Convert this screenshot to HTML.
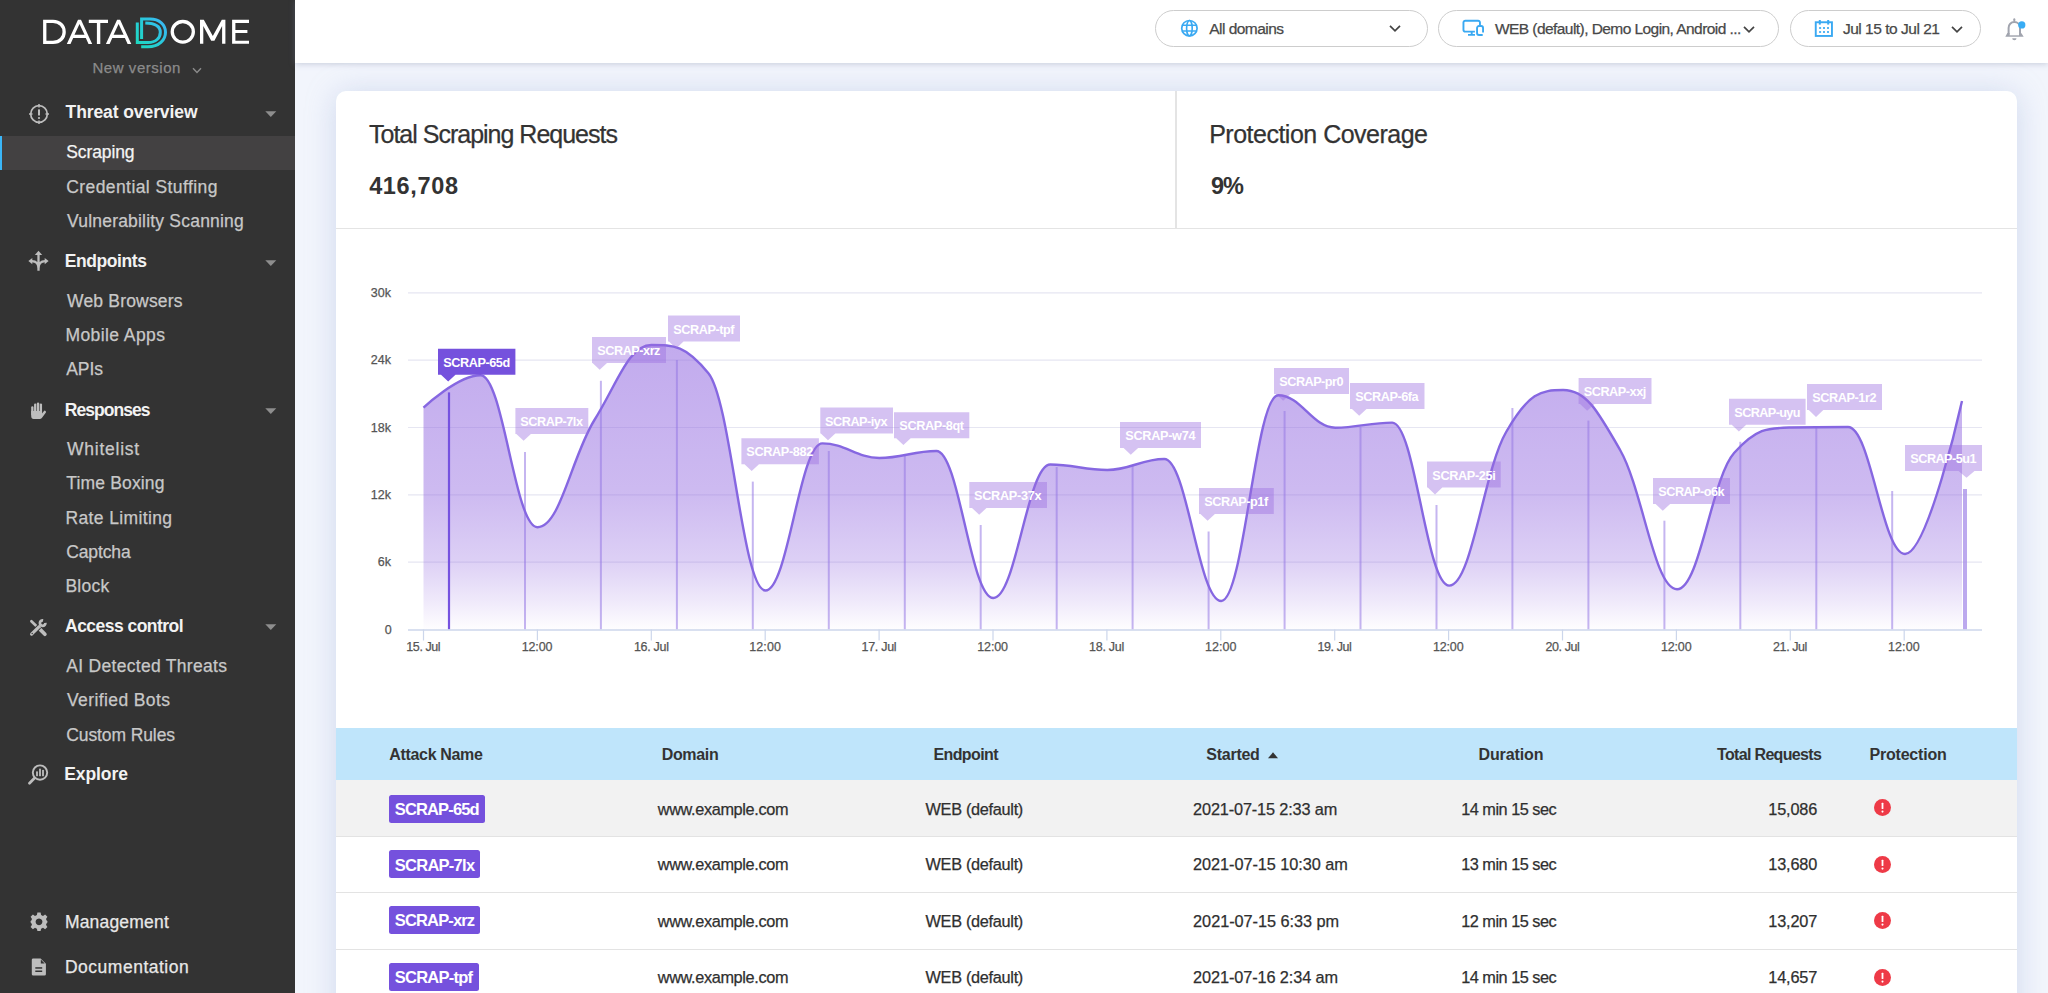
<!DOCTYPE html><html><head><meta charset='utf-8'><title>DataDome</title><style>
*{margin:0;padding:0;box-sizing:border-box}
html,body{width:2048px;height:993px;overflow:hidden;background:#f2f5fc;font-family:'Liberation Sans', sans-serif}
.t{position:absolute;white-space:nowrap;-webkit-text-stroke:0.25px currentColor}
.b{-webkit-text-stroke:0}
.ab{position:absolute}
.chart{position:absolute;left:0;top:0}
#side{position:absolute;left:0;top:0;width:295px;height:993px;background:#333333}
#sel{position:absolute;left:0;top:135.5px;width:295px;height:34.3px;background:#434142}
#selbar{position:absolute;left:0;top:135.5px;width:2px;height:34.3px;background:#3ab6f8}
#hdr{position:absolute;left:295px;top:0;width:1753px;height:63px;background:#fff;box-shadow:0 1px 6px rgba(120,130,160,0.35)}
.pill{position:absolute;top:10.4px;height:36.2px;border:1.5px solid #cdcdcd;border-radius:19px;background:#fff}
#card{position:absolute;left:335.5px;top:91.4px;width:1681px;height:1000px;background:#fff;border-radius:10px;box-shadow:0 2px 30px rgba(150,170,215,0.38)}
#vdiv{position:absolute;left:1175.4px;top:91.4px;width:1.2px;height:137px;background:#e4e4e4}
#hdiv{position:absolute;left:335.5px;top:228px;width:1681px;height:1.3px;background:#e4e4e4}
#thead{position:absolute;left:335.5px;top:728.2px;width:1681px;height:51.8px;background:#bfe5fb}
.row{position:absolute;left:335.5px;width:1681px}
.sep{position:absolute;left:335.5px;width:1681px;height:1.2px;background:#e3e3e3}
.badge{position:absolute;left:389.2px;height:28.3px;background:#7551dd;border-radius:2.5px}
</style></head><body>
<div id=side></div><div id=sel></div><div id=selbar></div>
<svg class=ab style='left:0;top:0' width=295 height=60 viewBox='0 0 295 60'>
<path d='M44.75,21.45 H53 C60,21.45 64.15,26.2 64.15,31.9 C64.15,37.6 60,42.35 53,42.35 H44.75 Z' fill=none stroke='#ffffff' stroke-width=3.3 stroke-linejoin=miter />
<path fill='#ffffff' fill-rule=evenodd d='M66.8,44 L78,19.8 L81,19.8 L92.2,44 L88.5,44 L85.8,38.1 L73.2,38.1 L70.5,44 Z M74.5,34.7 L84.5,34.7 L79.5,23.9 Z' />
<path fill='#ffffff' d='M88.8,19.8 H108 V23 H100.3 V44 H96.9 V23 H88.8 Z' />
<path fill='#ffffff' fill-rule=evenodd d='M105.9,44 L117.1,19.8 L120.1,19.8 L131.3,44 L127.6,44 L124.9,38.1 L112.3,38.1 L109.6,44 Z M113.6,34.7 L123.6,34.7 L118.6,23.9 Z' />
<ellipse cx=182.8 cy=31.8 rx=10.55 ry=10.3 fill=none stroke='#ffffff' stroke-width=3.3 />
<path fill='#ffffff' d='M200,43.75 V19.8 H203.8 L212.8,36.0 L221.8,19.8 H225.4 V43.75 H222.1 V26.0 L214.4,40.8 H211.2 L203.3,26.0 V43.75 Z' />
<path fill='#ffffff' d='M232.1,19.8 H249 V22.9 H235.4 V30.0 H247.4 V33.1 H235.4 V40.7 H249 V43.75 H232.1 Z' />
<g fill=none stroke='url(#lg2)' stroke-width=3.0>
<path d='M137.3 22.6 V42.6 H148 C156 42.6 160.3 37.8 160.3 32.2 C160.3 26.6 156 23.4 145.3 23.1' />
<path d='M141.6 39 V19 H150 C159.5 19 165.5 24.8 165.5 32.2 C165.5 40 159 46.8 148 46.8 H141.2' />
</g>
<defs><linearGradient id=lg2 x1=135 y1=45 x2=166 y2=20 gradientUnits=userSpaceOnUse><stop offset=0 stop-color='#1ed9bd' /><stop offset=0.5 stop-color='#27cbd8' /><stop offset=1 stop-color='#3db5f8' /></linearGradient></defs>
</svg>
<div id=card></div><div id=vdiv></div><div id=hdiv></div>
<div id=hdr></div>
<div class=pill style='left:1155.1px;width:273.2px'></div>
<div class=pill style='left:1437.9px;width:341.5px'></div>
<div class=pill style='left:1790.2px;width:191.3px'></div>
<div id=thead></div>
<div class=row style='top:780px;height:56.6px;background:#f2f2f2'></div>
<div class=row style='top:836.6px;height:55.9px;background:#ffffff'></div>
<div class=row style='top:892.5px;height:56.7px;background:#ffffff'></div>
<div class=row style='top:949.2px;height:56.8px;background:#ffffff'></div>
<div class=sep style='top:836.0px'></div>
<div class=sep style='top:891.9px'></div>
<div class=sep style='top:948.6px'></div>
<div class=badge style='top:794.7px;width:95.5px'></div>
<div class=badge style='top:850.2px;width:91.2px'></div>
<div class=badge style='top:906px;width:91.2px'></div>
<div class=badge style='top:963px;width:89.6px'></div>
<svg class=chart width=2048 height=993 viewBox='0 0 2048 993'>
<defs><linearGradient id=ag x1=0 y1=0 x2=0 y2=1 gradientUnits=objectBoundingBox><stop offset=0 stop-color='#966ee1' stop-opacity='0.58' /><stop offset=0.3 stop-color='#966ee1' stop-opacity='0.52' /><stop offset=0.53 stop-color='#966ee1' stop-opacity='0.47' /><stop offset=0.755 stop-color='#966ee1' stop-opacity='0.33' /><stop offset=0.9 stop-color='#966ee1' stop-opacity='0.15' /><stop offset=1 stop-color='#966ee1' stop-opacity='0.01' /></linearGradient></defs>
<line x1=408 x2=1982 y1=562.1 y2=562.1 stroke='#e6e6f2' stroke-width=1.2 />
<line x1=408 x2=1982 y1=494.8 y2=494.8 stroke='#e6e6f2' stroke-width=1.2 />
<line x1=408 x2=1982 y1=427.5 y2=427.5 stroke='#e6e6f2' stroke-width=1.2 />
<line x1=408 x2=1982 y1=360.1 y2=360.1 stroke='#e6e6f2' stroke-width=1.2 />
<line x1=408 x2=1982 y1=292.8 y2=292.8 stroke='#e6e6f2' stroke-width=1.2 />
<path d='M423.50,407.60 C423.50,407.60 457.69,375.20 480.48,375.20 C503.27,375.20 514.67,527.20 537.46,527.20 C560.26,527.20 571.65,456.44 594.44,420.00 C617.24,383.56 628.63,345.00 651.43,345.00 C674.22,345.00 685.61,345.00 708.41,373.20 C731.20,401.40 742.60,590.50 765.39,590.50 C788.18,590.50 799.58,443.40 822.37,443.40 C845.16,443.40 856.56,458.00 879.35,458.00 C902.14,458.00 913.54,451.00 936.33,451.00 C959.13,451.00 970.52,598.00 993.31,598.00 C1016.11,598.00 1027.50,464.50 1050.30,464.50 C1073.09,464.50 1084.49,470.00 1107.28,470.00 C1130.07,470.00 1141.47,459.00 1164.26,459.00 C1187.05,459.00 1198.45,601.00 1221.24,601.00 C1244.03,601.00 1255.43,395.20 1278.22,395.20 C1301.01,395.20 1312.41,427.70 1335.20,427.70 C1358.00,427.70 1369.39,422.60 1392.19,422.60 C1414.98,422.60 1426.37,585.60 1449.17,585.60 C1471.96,585.60 1483.36,471.12 1506.15,432.00 C1528.94,392.88 1540.34,390.00 1563.13,390.00 C1585.92,390.00 1597.32,410.14 1620.11,450.00 C1642.90,489.86 1654.30,589.30 1677.09,589.30 C1699.89,589.30 1711.28,478.50 1734.07,453.00 C1756.87,427.50 1768.26,428.00 1791.06,427.50 C1813.85,427.00 1825.24,427.00 1848.04,427.00 C1870.83,427.00 1882.23,554.00 1905.02,554.00 C1927.81,554.00 1962.00,400.90 1962.00,400.90 L1962.00,629.50 L423.50,629.50 Z' fill='url(#ag)' />
<line x1=449.0 x2=449.0 y1=392.4 y2=629.5 stroke='#7652e0' stroke-width=2.2 />
<line x1=525.0 x2=525.0 y1=452 y2=629.5 stroke='#9678e4' stroke-opacity=0.55 stroke-width=2 />
<line x1=600.9 x2=600.9 y1=380.8 y2=629.5 stroke='#9678e4' stroke-opacity=0.55 stroke-width=2 />
<line x1=676.9 x2=676.9 y1=360 y2=629.5 stroke='#9678e4' stroke-opacity=0.55 stroke-width=2 />
<line x1=752.8 x2=752.8 y1=481.6 y2=629.5 stroke='#9678e4' stroke-opacity=0.55 stroke-width=2 />
<line x1=828.8 x2=828.8 y1=451 y2=629.5 stroke='#9678e4' stroke-opacity=0.55 stroke-width=2 />
<line x1=904.8 x2=904.8 y1=456 y2=629.5 stroke='#9678e4' stroke-opacity=0.55 stroke-width=2 />
<line x1=980.7 x2=980.7 y1=525 y2=629.5 stroke='#9678e4' stroke-opacity=0.55 stroke-width=2 />
<line x1=1056.7 x2=1056.7 y1=467 y2=629.5 stroke='#9678e4' stroke-opacity=0.55 stroke-width=2 />
<line x1=1132.6 x2=1132.6 y1=466 y2=629.5 stroke='#9678e4' stroke-opacity=0.55 stroke-width=2 />
<line x1=1208.6 x2=1208.6 y1=531.5 y2=629.5 stroke='#9678e4' stroke-opacity=0.55 stroke-width=2 />
<line x1=1284.6 x2=1284.6 y1=411 y2=629.5 stroke='#9678e4' stroke-opacity=0.55 stroke-width=2 />
<line x1=1360.5 x2=1360.5 y1=427 y2=629.5 stroke='#9678e4' stroke-opacity=0.55 stroke-width=2 />
<line x1=1436.5 x2=1436.5 y1=505 y2=629.5 stroke='#9678e4' stroke-opacity=0.55 stroke-width=2 />
<line x1=1512.4 x2=1512.4 y1=408 y2=629.5 stroke='#9678e4' stroke-opacity=0.55 stroke-width=2 />
<line x1=1588.4 x2=1588.4 y1=420.6 y2=629.5 stroke='#9678e4' stroke-opacity=0.55 stroke-width=2 />
<line x1=1664.4 x2=1664.4 y1=520.7 y2=629.5 stroke='#9678e4' stroke-opacity=0.55 stroke-width=2 />
<line x1=1740.3 x2=1740.3 y1=441.8 y2=629.5 stroke='#9678e4' stroke-opacity=0.55 stroke-width=2 />
<line x1=1816.3 x2=1816.3 y1=427.7 y2=629.5 stroke='#9678e4' stroke-opacity=0.55 stroke-width=2 />
<line x1=1892.2 x2=1892.2 y1=491 y2=629.5 stroke='#9678e4' stroke-opacity=0.55 stroke-width=2 />
<line x1=1965.0 x2=1965.0 y1=489 y2=629.5 stroke='#a58ce8' stroke-opacity=0.75 stroke-width=4 />
<path d='M423.50,407.60 C423.50,407.60 457.69,375.20 480.48,375.20 C503.27,375.20 514.67,527.20 537.46,527.20 C560.26,527.20 571.65,456.44 594.44,420.00 C617.24,383.56 628.63,345.00 651.43,345.00 C674.22,345.00 685.61,345.00 708.41,373.20 C731.20,401.40 742.60,590.50 765.39,590.50 C788.18,590.50 799.58,443.40 822.37,443.40 C845.16,443.40 856.56,458.00 879.35,458.00 C902.14,458.00 913.54,451.00 936.33,451.00 C959.13,451.00 970.52,598.00 993.31,598.00 C1016.11,598.00 1027.50,464.50 1050.30,464.50 C1073.09,464.50 1084.49,470.00 1107.28,470.00 C1130.07,470.00 1141.47,459.00 1164.26,459.00 C1187.05,459.00 1198.45,601.00 1221.24,601.00 C1244.03,601.00 1255.43,395.20 1278.22,395.20 C1301.01,395.20 1312.41,427.70 1335.20,427.70 C1358.00,427.70 1369.39,422.60 1392.19,422.60 C1414.98,422.60 1426.37,585.60 1449.17,585.60 C1471.96,585.60 1483.36,471.12 1506.15,432.00 C1528.94,392.88 1540.34,390.00 1563.13,390.00 C1585.92,390.00 1597.32,410.14 1620.11,450.00 C1642.90,489.86 1654.30,589.30 1677.09,589.30 C1699.89,589.30 1711.28,478.50 1734.07,453.00 C1756.87,427.50 1768.26,428.00 1791.06,427.50 C1813.85,427.00 1825.24,427.00 1848.04,427.00 C1870.83,427.00 1882.23,554.00 1905.02,554.00 C1927.81,554.00 1962.00,400.90 1962.00,400.90' fill='none' stroke='#8667e1' stroke-width=2.4 stroke-linejoin=round />
<line x1=408 x2=1982 y1=630.0 y2=630.0 stroke='#ccd6eb' stroke-width=1.6 />
<line x1=423.5 x2=423.5 y1=629.5 y2=640.5 stroke='#ccd6eb' stroke-width=1.2 />
<line x1=537.4 x2=537.4 y1=629.5 y2=640.5 stroke='#ccd6eb' stroke-width=1.2 />
<line x1=651.3 x2=651.3 y1=629.5 y2=640.5 stroke='#ccd6eb' stroke-width=1.2 />
<line x1=765.2 x2=765.2 y1=629.5 y2=640.5 stroke='#ccd6eb' stroke-width=1.2 />
<line x1=879.1 x2=879.1 y1=629.5 y2=640.5 stroke='#ccd6eb' stroke-width=1.2 />
<line x1=993.0 x2=993.0 y1=629.5 y2=640.5 stroke='#ccd6eb' stroke-width=1.2 />
<line x1=1106.9 x2=1106.9 y1=629.5 y2=640.5 stroke='#ccd6eb' stroke-width=1.2 />
<line x1=1220.8 x2=1220.8 y1=629.5 y2=640.5 stroke='#ccd6eb' stroke-width=1.2 />
<line x1=1334.7 x2=1334.7 y1=629.5 y2=640.5 stroke='#ccd6eb' stroke-width=1.2 />
<line x1=1448.6 x2=1448.6 y1=629.5 y2=640.5 stroke='#ccd6eb' stroke-width=1.2 />
<line x1=1562.5 x2=1562.5 y1=629.5 y2=640.5 stroke='#ccd6eb' stroke-width=1.2 />
<line x1=1676.4 x2=1676.4 y1=629.5 y2=640.5 stroke='#ccd6eb' stroke-width=1.2 />
<line x1=1790.3 x2=1790.3 y1=629.5 y2=640.5 stroke='#ccd6eb' stroke-width=1.2 />
<line x1=1904.2 x2=1904.2 y1=629.5 y2=640.5 stroke='#ccd6eb' stroke-width=1.2 />
<polygon points='438,348.8 515.4,348.8 515.4,374.8 455.5,374.8 448.2,381.6 441,374.8 438,374.8' fill='#7551dd' />
<polygon points='515.4,408 588.3,408 588.3,434.0 530.9,434.0 523.6,440.8 516.4,434.0 515.4,434.0' fill='#9a6ee0' fill-opacity='0.42' />
<polygon points='592,337 666,337 666,363.0 607.0,363.0 599.7,369.8 592.5,363.0 592,363.0' fill='#9a6ee0' fill-opacity='0.42' />
<polygon points='668,315.6 740,315.6 740,341.6 683.5,341.6 676.2,348.40000000000003 669,341.6 668,341.6' fill='#9a6ee0' fill-opacity='0.42' />
<polygon points='741.4,438.2 818.9,438.2 818.9,464.2 759.0,464.2 751.7,471.0 744.5,464.2 741.4,464.2' fill='#9a6ee0' fill-opacity='0.42' />
<polygon points='820.3,407.5 893.0,407.5 893.0,433.5 835.3,433.5 828.0,440.3 820.8,433.5 820.3,433.5' fill='#9a6ee0' fill-opacity='0.42' />
<polygon points='894,412.3 969.3,412.3 969.3,438.3 910.7,438.3 903.4000000000001,445.1 896.2,438.3 894,438.3' fill='#9a6ee0' fill-opacity='0.42' />
<polygon points='969.3,482 1047.0,482 1047.0,508.0 986.5,508.0 979.2,514.8 972,508.0 969.3,508.0' fill='#9a6ee0' fill-opacity='0.42' />
<polygon points='1120,422 1201,422 1201,448.0 1138.1,448.0 1130.8,454.8 1123.6,448.0 1120,448.0' fill='#9a6ee0' fill-opacity='0.42' />
<polygon points='1199,488 1273.8,488 1273.8,514.0 1214.9,514.0 1207.6000000000001,520.8 1200.4,514.0 1199,514.0' fill='#9a6ee0' fill-opacity='0.42' />
<polygon points='1274,368 1349,368 1349,394.0 1290.5,394.0 1283.2,400.8 1276,394.0 1274,394.0' fill='#9a6ee0' fill-opacity='0.42' />
<polygon points='1350,383 1424.5,383 1424.5,409.0 1366.5,409.0 1359.2,415.8 1352,409.0 1350,409.0' fill='#9a6ee0' fill-opacity='0.42' />
<polygon points='1427,461.6 1500.7,461.6 1500.7,487.6 1442.3,487.6 1435.0,494.40000000000003 1427.8,487.6 1427,487.6' fill='#9a6ee0' fill-opacity='0.42' />
<polygon points='1578.6,378 1651.5,378 1651.5,404.0 1594.5,404.0 1587.2,410.8 1580,404.0 1578.6,404.0' fill='#9a6ee0' fill-opacity='0.42' />
<polygon points='1653,478 1730,478 1730,504.0 1670.1,504.0 1662.8,510.8 1655.6,504.0 1653,504.0' fill='#9a6ee0' fill-opacity='0.42' />
<polygon points='1729,398.7 1805.6,398.7 1805.6,424.7 1746.2,424.7 1738.9,431.5 1731.7,424.7 1729,424.7' fill='#9a6ee0' fill-opacity='0.42' />
<polygon points='1807,384.1 1882,384.1 1882,410.1 1823.3,410.1 1816.0,416.90000000000003 1808.8,410.1 1807,410.1' fill='#9a6ee0' fill-opacity='0.42' />
<polygon points='1905,445 1982,445 1982,471.0 1974.5,471.0 1966.5,477.8 1958.5,471.0 1905,471.0' fill='#9a6ee0' fill-opacity='0.42' />
</svg>
<div class='t' style="left:92.49px;top:60.00px;font-size:15px;line-height:15px;color:#8b8b8b;letter-spacing:0.545px;">New version</div>
<div class='t b' style="left:65.58px;top:104.00px;font-size:17.5px;line-height:17.5px;color:#f2f2f2;font-weight:700;letter-spacing:-0.095px;">Threat overview</div>
<div class='t' style="left:66.22px;top:144.00px;font-size:17.5px;line-height:17.5px;color:#f4f4f4;letter-spacing:-0.102px;">Scraping</div>
<div class='t' style="left:66.22px;top:179.00px;font-size:17.5px;line-height:17.5px;color:#c8c8c8;letter-spacing:0.416px;">Credential Stuffing</div>
<div class='t' style="left:67.02px;top:213.00px;font-size:17.5px;line-height:17.5px;color:#c8c8c8;letter-spacing:0.201px;">Vulnerability Scanning</div>
<div class='t b' style="left:64.78px;top:253.00px;font-size:17.5px;line-height:17.5px;color:#f2f2f2;font-weight:700;letter-spacing:-0.423px;">Endpoints</div>
<div class='t' style="left:67.02px;top:293.00px;font-size:17.5px;line-height:17.5px;color:#c8c8c8;letter-spacing:0.189px;">Web Browsers</div>
<div class='t' style="left:65.42px;top:327.00px;font-size:17.5px;line-height:17.5px;color:#c8c8c8;letter-spacing:0.428px;">Mobile Apps</div>
<div class='t' style="left:66.22px;top:361.00px;font-size:17.5px;line-height:17.5px;color:#c8c8c8;letter-spacing:-0.023px;">APIs</div>
<div class='t b' style="left:64.78px;top:402.00px;font-size:17.5px;line-height:17.5px;color:#f2f2f2;font-weight:700;letter-spacing:-0.947px;">Responses</div>
<div class='t' style="left:67.02px;top:441.00px;font-size:17.5px;line-height:17.5px;color:#c8c8c8;letter-spacing:0.749px;">Whitelist</div>
<div class='t' style="left:66.22px;top:475.00px;font-size:17.5px;line-height:17.5px;color:#c8c8c8;letter-spacing:0.165px;">Time Boxing</div>
<div class='t' style="left:65.42px;top:510.00px;font-size:17.5px;line-height:17.5px;color:#c8c8c8;letter-spacing:0.380px;">Rate Limiting</div>
<div class='t' style="left:66.22px;top:544.00px;font-size:17.5px;line-height:17.5px;color:#c8c8c8;letter-spacing:-0.118px;">Captcha</div>
<div class='t' style="left:65.42px;top:578.00px;font-size:17.5px;line-height:17.5px;color:#c8c8c8;letter-spacing:0.256px;">Block</div>
<div class='t b' style="left:65.04px;top:618.00px;font-size:17.5px;line-height:17.5px;color:#f2f2f2;font-weight:700;letter-spacing:-0.527px;">Access control</div>
<div class='t' style="left:66.22px;top:658.00px;font-size:17.5px;line-height:17.5px;color:#c8c8c8;letter-spacing:0.301px;">AI Detected Threats</div>
<div class='t' style="left:67.02px;top:692.00px;font-size:17.5px;line-height:17.5px;color:#c8c8c8;letter-spacing:0.390px;">Verified Bots</div>
<div class='t' style="left:66.22px;top:727.00px;font-size:17.5px;line-height:17.5px;color:#c8c8c8;letter-spacing:-0.099px;">Custom Rules</div>
<div class='t b' style="left:64.24px;top:766.00px;font-size:17.5px;line-height:17.5px;color:#f2f2f2;font-weight:700;letter-spacing:-0.084px;">Explore</div>
<div class='t' style="left:64.95px;top:914.00px;font-size:17.5px;line-height:17.5px;color:#e8e8e8;letter-spacing:0.185px;">Management</div>
<div class='t' style="left:64.95px;top:959.00px;font-size:17.5px;line-height:17.5px;color:#e8e8e8;letter-spacing:0.507px;">Documentation</div>
<div class='t' style="left:1209.25px;top:21.00px;font-size:15.5px;line-height:15.5px;color:#484848;letter-spacing:-0.539px;">All domains</div>
<div class='t' style="left:1494.97px;top:21.00px;font-size:15.5px;line-height:15.5px;color:#484848;letter-spacing:-0.561px;">WEB (default), Demo Login, Android ...</div>
<div class='t' style="left:1842.89px;top:21.00px;font-size:15.5px;line-height:15.5px;color:#484848;letter-spacing:-0.478px;">Jul 15 to Jul 21</div>
<div class='t' style="left:369.03px;top:122.00px;font-size:25px;line-height:25px;color:#333333;letter-spacing:-1.003px;">Total Scraping Requests</div>
<div class='t b' style="left:369.14px;top:175.00px;font-size:23.5px;line-height:23.5px;color:#333333;font-weight:700;letter-spacing:0.661px;">416,708</div>
<div class='t' style="left:1209.17px;top:122.00px;font-size:25px;line-height:25px;color:#333333;letter-spacing:-0.502px;">Protection Coverage</div>
<div class='t b' style="left:1210.88px;top:175.00px;font-size:23.5px;line-height:23.5px;color:#333333;font-weight:700;letter-spacing:-0.969px;">9%</div>
<div class='t' style="left:384.78px;top:624.00px;font-size:12.5px;line-height:12.5px;color:#555555;">0</div>
<div class='t' style="left:377.73px;top:556.00px;font-size:12.5px;line-height:12.5px;color:#555555;">6k</div>
<div class='t' style="left:370.78px;top:489.00px;font-size:12.5px;line-height:12.5px;color:#555555;">12k</div>
<div class='t' style="left:370.78px;top:422.00px;font-size:12.5px;line-height:12.5px;color:#555555;">18k</div>
<div class='t' style="left:370.78px;top:354.00px;font-size:12.5px;line-height:12.5px;color:#555555;">24k</div>
<div class='t' style="left:370.78px;top:287.00px;font-size:12.5px;line-height:12.5px;color:#555555;">30k</div>
<div class='t' style="left:406.34px;top:641.00px;font-size:12.5px;line-height:12.5px;color:#555555;letter-spacing:-0.421px;">15. Jul</div>
<div class='t' style="left:521.72px;top:641.00px;font-size:12.5px;line-height:12.5px;color:#555555;letter-spacing:-0.130px;">12:00</div>
<div class='t' style="left:633.93px;top:641.00px;font-size:12.5px;line-height:12.5px;color:#555555;letter-spacing:-0.287px;">16. Jul</div>
<div class='t' style="left:749.31px;top:641.00px;font-size:12.5px;line-height:12.5px;color:#555555;letter-spacing:0.070px;">12:00</div>
<div class='t' style="left:861.52px;top:641.00px;font-size:12.5px;line-height:12.5px;color:#555555;letter-spacing:-0.287px;">17. Jul</div>
<div class='t' style="left:977.30px;top:641.00px;font-size:12.5px;line-height:12.5px;color:#555555;letter-spacing:-0.130px;">12:00</div>
<div class='t' style="left:1089.12px;top:641.00px;font-size:12.5px;line-height:12.5px;color:#555555;letter-spacing:-0.287px;">18. Jul</div>
<div class='t' style="left:1204.89px;top:641.00px;font-size:12.5px;line-height:12.5px;color:#555555;letter-spacing:0.070px;">12:00</div>
<div class='t' style="left:1317.51px;top:641.00px;font-size:12.5px;line-height:12.5px;color:#555555;letter-spacing:-0.421px;">19. Jul</div>
<div class='t' style="left:1432.88px;top:641.00px;font-size:12.5px;line-height:12.5px;color:#555555;letter-spacing:-0.130px;">12:00</div>
<div class='t' style="left:1545.50px;top:641.00px;font-size:12.5px;line-height:12.5px;color:#555555;letter-spacing:-0.421px;">20. Jul</div>
<div class='t' style="left:1660.88px;top:641.00px;font-size:12.5px;line-height:12.5px;color:#555555;letter-spacing:-0.130px;">12:00</div>
<div class='t' style="left:1773.09px;top:641.00px;font-size:12.5px;line-height:12.5px;color:#555555;letter-spacing:-0.421px;">21. Jul</div>
<div class='t' style="left:1888.07px;top:641.00px;font-size:12.5px;line-height:12.5px;color:#555555;letter-spacing:0.070px;">12:00</div>
<div class='t b' style="left:389.32px;top:747.00px;font-size:16px;line-height:16px;color:#333333;font-weight:700;letter-spacing:-0.338px;">Attack Name</div>
<div class='t b' style="left:661.70px;top:747.00px;font-size:16px;line-height:16px;color:#333333;font-weight:700;letter-spacing:-0.338px;">Domain</div>
<div class='t b' style="left:933.42px;top:747.00px;font-size:16px;line-height:16px;color:#333333;font-weight:700;letter-spacing:-0.591px;">Endpoint</div>
<div class='t b' style="left:1206.32px;top:747.00px;font-size:16px;line-height:16px;color:#333333;font-weight:700;letter-spacing:-0.264px;">Started</div>
<div class='t b' style="left:1478.52px;top:747.00px;font-size:16px;line-height:16px;color:#333333;font-weight:700;letter-spacing:-0.115px;">Duration</div>
<div class='t b' style="left:1717.04px;top:747.00px;font-size:16px;line-height:16px;color:#333333;font-weight:700;letter-spacing:-0.668px;">Total Requests</div>
<div class='t b' style="left:1869.52px;top:747.00px;font-size:16px;line-height:16px;color:#333333;font-weight:700;letter-spacing:-0.208px;">Protection</div>
<div class='t' style="left:657.74px;top:801.00px;font-size:16.3px;line-height:16.3px;color:#2f2f2f;letter-spacing:-0.357px;">www.example.com</div>
<div class='t' style="left:925.56px;top:801.00px;font-size:16.3px;line-height:16.3px;color:#2f2f2f;letter-spacing:-0.301px;">WEB (default)</div>
<div class='t' style="left:1193.12px;top:801.00px;font-size:16.3px;line-height:16.3px;color:#2f2f2f;letter-spacing:-0.145px;">2021-07-15 2:33 am</div>
<div class='t' style="left:1461.22px;top:801.00px;font-size:16.3px;line-height:16.3px;color:#2f2f2f;letter-spacing:-0.494px;">14 min 15 sec</div>
<div class='t' style="left:1768.23px;top:801.00px;font-size:16.3px;line-height:16.3px;color:#2f2f2f;letter-spacing:-0.146px;">15,086</div>
<div class='t' style="left:657.74px;top:856.00px;font-size:16.3px;line-height:16.3px;color:#2f2f2f;letter-spacing:-0.357px;">www.example.com</div>
<div class='t' style="left:925.56px;top:856.00px;font-size:16.3px;line-height:16.3px;color:#2f2f2f;letter-spacing:-0.301px;">WEB (default)</div>
<div class='t' style="left:1193.12px;top:856.00px;font-size:16.3px;line-height:16.3px;color:#2f2f2f;letter-spacing:-0.054px;">2021-07-15 10:30 am</div>
<div class='t' style="left:1461.22px;top:856.00px;font-size:16.3px;line-height:16.3px;color:#2f2f2f;letter-spacing:-0.494px;">13 min 15 sec</div>
<div class='t' style="left:1768.23px;top:856.00px;font-size:16.3px;line-height:16.3px;color:#2f2f2f;letter-spacing:-0.146px;">13,680</div>
<div class='t' style="left:657.74px;top:913.00px;font-size:16.3px;line-height:16.3px;color:#2f2f2f;letter-spacing:-0.357px;">www.example.com</div>
<div class='t' style="left:925.56px;top:913.00px;font-size:16.3px;line-height:16.3px;color:#2f2f2f;letter-spacing:-0.301px;">WEB (default)</div>
<div class='t' style="left:1193.12px;top:913.00px;font-size:16.3px;line-height:16.3px;color:#2f2f2f;letter-spacing:-0.044px;">2021-07-15 6:33 pm</div>
<div class='t' style="left:1461.22px;top:913.00px;font-size:16.3px;line-height:16.3px;color:#2f2f2f;letter-spacing:-0.494px;">12 min 15 sec</div>
<div class='t' style="left:1768.23px;top:913.00px;font-size:16.3px;line-height:16.3px;color:#2f2f2f;letter-spacing:-0.146px;">13,207</div>
<div class='t' style="left:657.74px;top:969.00px;font-size:16.3px;line-height:16.3px;color:#2f2f2f;letter-spacing:-0.357px;">www.example.com</div>
<div class='t' style="left:925.56px;top:969.00px;font-size:16.3px;line-height:16.3px;color:#2f2f2f;letter-spacing:-0.301px;">WEB (default)</div>
<div class='t' style="left:1193.12px;top:969.00px;font-size:16.3px;line-height:16.3px;color:#2f2f2f;letter-spacing:-0.097px;">2021-07-16 2:34 am</div>
<div class='t' style="left:1461.22px;top:969.00px;font-size:16.3px;line-height:16.3px;color:#2f2f2f;letter-spacing:-0.494px;">14 min 15 sec</div>
<div class='t' style="left:1768.23px;top:969.00px;font-size:16.3px;line-height:16.3px;color:#2f2f2f;letter-spacing:-0.146px;">14,657</div>
<div class='t b' style="left:394.75px;top:801.00px;font-size:16.5px;line-height:16.5px;color:#ffffff;font-weight:700;letter-spacing:-0.848px;">SCRAP-65d</div>
<div class='t b' style="left:394.75px;top:857.00px;font-size:16.5px;line-height:16.5px;color:#ffffff;font-weight:700;letter-spacing:-0.730px;">SCRAP-7lx</div>
<div class='t b' style="left:394.75px;top:912.00px;font-size:16.5px;line-height:16.5px;color:#ffffff;font-weight:700;letter-spacing:-0.844px;">SCRAP-xrz</div>
<div class='t b' style="left:394.75px;top:969.00px;font-size:16.5px;line-height:16.5px;color:#ffffff;font-weight:700;letter-spacing:-0.756px;">SCRAP-tpf</div>
<div class='t b' style="left:443.37px;top:357.00px;font-size:12.7px;line-height:12.7px;color:#ffffff;font-weight:700;letter-spacing:-0.460px;">SCRAP-65d</div>
<div class='t b' style="left:520.29px;top:416.00px;font-size:12.7px;line-height:12.7px;color:#ffffff;font-weight:700;letter-spacing:-0.445px;">SCRAP-7lx</div>
<div class='t b' style="left:597.37px;top:345.00px;font-size:12.7px;line-height:12.7px;color:#ffffff;font-weight:700;letter-spacing:-0.486px;">SCRAP-xrz</div>
<div class='t b' style="left:673.37px;top:324.00px;font-size:12.7px;line-height:12.7px;color:#ffffff;font-weight:700;letter-spacing:-0.468px;">SCRAP-tpf</div>
<div class='t b' style="left:746.29px;top:446.00px;font-size:12.7px;line-height:12.7px;color:#ffffff;font-weight:700;letter-spacing:-0.352px;">SCRAP-882</div>
<div class='t b' style="left:825.11px;top:416.00px;font-size:12.7px;line-height:12.7px;color:#ffffff;font-weight:700;letter-spacing:-0.490px;">SCRAP-iyx</div>
<div class='t b' style="left:899.37px;top:420.00px;font-size:12.7px;line-height:12.7px;color:#ffffff;font-weight:700;letter-spacing:-0.379px;">SCRAP-8qt</div>
<div class='t b' style="left:974.11px;top:490.00px;font-size:12.7px;line-height:12.7px;color:#ffffff;font-weight:700;letter-spacing:-0.307px;">SCRAP-37x</div>
<div class='t b' style="left:1125.37px;top:430.00px;font-size:12.7px;line-height:12.7px;color:#ffffff;font-weight:700;letter-spacing:-0.316px;">SCRAP-w74</div>
<div class='t b' style="left:1204.37px;top:496.00px;font-size:12.7px;line-height:12.7px;color:#ffffff;font-weight:700;letter-spacing:-0.491px;">SCRAP-p1f</div>
<div class='t b' style="left:1279.37px;top:376.00px;font-size:12.7px;line-height:12.7px;color:#ffffff;font-weight:700;letter-spacing:-0.536px;">SCRAP-pr0</div>
<div class='t b' style="left:1355.37px;top:391.00px;font-size:12.7px;line-height:12.7px;color:#ffffff;font-weight:700;letter-spacing:-0.473px;">SCRAP-6fa</div>
<div class='t b' style="left:1432.37px;top:470.00px;font-size:12.7px;line-height:12.7px;color:#ffffff;font-weight:700;letter-spacing:-0.365px;">SCRAP-25i</div>
<div class='t b' style="left:1583.65px;top:386.00px;font-size:12.7px;line-height:12.7px;color:#ffffff;font-weight:700;letter-spacing:-0.445px;">SCRAP-xxj</div>
<div class='t b' style="left:1658.37px;top:486.00px;font-size:12.7px;line-height:12.7px;color:#ffffff;font-weight:700;letter-spacing:-0.550px;">SCRAP-o6k</div>
<div class='t b' style="left:1734.37px;top:407.00px;font-size:12.7px;line-height:12.7px;color:#ffffff;font-weight:700;letter-spacing:-0.628px;">SCRAP-uyu</div>
<div class='t b' style="left:1812.37px;top:392.00px;font-size:12.7px;line-height:12.7px;color:#ffffff;font-weight:700;letter-spacing:-0.448px;">SCRAP-1r2</div>
<div class='t b' style="left:1910.37px;top:453.00px;font-size:12.7px;line-height:12.7px;color:#ffffff;font-weight:700;letter-spacing:-0.550px;">SCRAP-5u1</div>
<svg class=ab style='left:28px;top:103px' width=22 height=22 viewBox='0 0 22 22'>
<circle cx=11 cy=11 r=8.3 fill=none stroke='#bdbdbd' stroke-width=1.7 />
<line x1=11 y1=1 x2=11 y2=4.5 stroke='#bdbdbd' stroke-width=1.5 /><line x1=11 y1=17.5 x2=11 y2=21 stroke='#bdbdbd' stroke-width=1.5 />
<line x1=1 y1=11 x2=4.5 y2=11 stroke='#bdbdbd' stroke-width=1.5 /><line x1=17.5 y1=11 x2=21 y2=11 stroke='#bdbdbd' stroke-width=1.5 />
<rect x=10 y=6.3 width=2 height=6.2 rx=0.6 fill='#bdbdbd' /><circle cx=11 cy=15 r=1.1 fill='#bdbdbd' /></svg>
<svg class=ab style='left:28px;top:250px' width=22 height=22 viewBox='0 0 22 22'>
<path d='M10.5 20.8 V4.5 M10.5 18.5 C10.5 13.6 8 11.1 3.8 11.1 M10.5 18.5 C10.5 13.6 13 11.1 17.2 11.1' stroke='#bdbdbd' stroke-width=2.3 fill=none />
<path d='M10.5 0.8 L6.8 4.9 H14.2 Z' fill='#bdbdbd' /><path d='M0.4 11.1 L4.3 7.9 V14.3 Z' fill='#bdbdbd' /><path d='M20.6 11.1 L16.7 7.9 V14.3 Z' fill='#bdbdbd' /></svg>
<svg class=ab style='left:28px;top:400px' width=20 height=22 viewBox='28 400 20 22'>
<g fill='#bdbdbd'><rect x=31.2 y=406.3 width=2.3 height=9 rx=1.1 /><rect x=34.05 y=403.4 width=2.3 height=11 rx=1.1 />
<rect x=36.9 y=402.5 width=2.3 height=11 rx=1.1 /><rect x=39.75 y=403.4 width=2.3 height=11 rx=1.1 />
<path d='M31.2 411 H42.05 V413.5 L44 410.9 a1.25 1.25 0 0 1 1.9 1.5 L42.2 417.6 Q41.5 418.9 40 418.9 H33.6 Q31.2 418.9 31.2 416 Z' /></g></svg>
<svg class=ab style='left:29px;top:618px' width=19 height=19 viewBox='0 0 19 19'>
<path d='M2.4 3.3 L8.6 9.3' stroke='#bdbdbd' stroke-width=2.7 stroke-linecap=round />
<path d='M10.3 10.6 L15.9 16.2' stroke='#bdbdbd' stroke-width=3.7 stroke-linecap=round />
<path d='M2.6 16.1 L10.2 8.6' stroke='#333333' stroke-width=5 />
<path d='M2.6 16.1 L10.2 8.6' stroke='#bdbdbd' stroke-width=3.2 stroke-linecap=round />
<path d='M16.4 4.9 A2.75 2.75 0 1 1 14.1 2.35' stroke='#bdbdbd' stroke-width=2.7 fill=none />
<circle cx=3.2 cy=15.5 r=0.7 fill='#333333' /></svg>
<svg class=ab style='left:28px;top:764.2px' width=21 height=22 viewBox='0 0 21 22'>
<circle cx=12 cy=8.6 r=7.2 fill=none stroke='#bdbdbd' stroke-width=1.9 />
<path d='M6.6 14 L1.5 19.3' stroke='#bdbdbd' stroke-width=2.7 stroke-linecap=round />
<rect x=8.1 y=7.4 width=1.8 height=4.8 fill='#bdbdbd' /><rect x=11.1 y=4.7 width=1.8 height=7.5 fill='#bdbdbd' /><rect x=14.1 y=5.9 width=1.8 height=6.3 fill='#bdbdbd' /></svg>
<svg class=ab style='left:30px;top:912px' width=18 height=19 viewBox='0 0 18 19'>
<path fill='#bdbdbd' fill-rule=evenodd d='M7.4 0.6 H10.6 L11.1 3 L13 3.9 L15.1 2.5 L17.4 4.8 L16 6.9 L16.8 8.8 L17.4 9 V10.4 L16.8 10.9 L16 12.8 L17.4 14.9 L15.1 17.2 L13 15.8 L11.1 16.7 L10.6 19 H7.4 L6.9 16.7 L5 15.8 L2.9 17.2 L0.6 14.9 L2 12.8 L1.2 10.9 L0.6 10.4 V9 L1.2 8.8 L2 6.9 L0.6 4.8 L2.9 2.5 L5 3.9 L6.9 3 Z M9 6.4 a3.4 3.4 0 1 0 0.01 0 Z' /></svg>
<svg class=ab style='left:31px;top:958px' width=16 height=18 viewBox='0 0 16 18'>
<path fill='#bdbdbd' d='M2.2 0.4 H9.6 L14.9 5.8 V16.2 a1.4 1.4 0 0 1 -1.4 1.4 H2.2 a1.4 1.4 0 0 1 -1.4 -1.4 V1.8 a1.4 1.4 0 0 1 1.4 -1.4 Z' />
<path fill='#333333' d='M9.8 1.6 L13.7 5.6 H9.8 Z' />
<rect x=4.3 y=9.2 width=6.9 height=1.5 fill='#333333' /><rect x=4.3 y=12.5 width=6.9 height=1.5 fill='#333333' /></svg>
<svg class=ab style='left:265px;top:111.2px' width=12 height=7 viewBox='0 0 12 7'><path d='M0.3 0.3 H11.3 L5.8 6 Z' fill='#8e8e8e' /></svg>
<svg class=ab style='left:265px;top:259.8px' width=12 height=7 viewBox='0 0 12 7'><path d='M0.3 0.3 H11.3 L5.8 6 Z' fill='#8e8e8e' /></svg>
<svg class=ab style='left:265px;top:408.2px' width=12 height=7 viewBox='0 0 12 7'><path d='M0.3 0.3 H11.3 L5.8 6 Z' fill='#8e8e8e' /></svg>
<svg class=ab style='left:265px;top:624.3px' width=12 height=7 viewBox='0 0 12 7'><path d='M0.3 0.3 H11.3 L5.8 6 Z' fill='#8e8e8e' /></svg>
<svg class=ab style='left:192px;top:67px' width=10 height=7 viewBox='0 0 10 7'><path d='M1 1.2 L5 5.5 L9 1.2' stroke='#8b8b8b' stroke-width=1.4 fill=none /></svg>
<svg class=ab style='left:1180px;top:19px' width=19 height=19 viewBox='0 0 19 19'>
<circle cx=9.4 cy=9.2 r=7.7 fill=none stroke='#3aa9f2' stroke-width=1.7 /><ellipse cx=9.4 cy=9.2 rx=2.8 ry=7.7 fill=none stroke='#3aa9f2' stroke-width=1.6 />
<path d='M2.2 6.2 H16.6 M2.2 12.0 H16.6' stroke='#3aa9f2' stroke-width=1.6 /></svg>
<svg class=ab style='left:1462px;top:19px' width=23 height=18 viewBox='0 0 23 18'>
<g fill=none stroke='#3aa9f2' stroke-width=1.9>
<path d='M17.95 6.4 V3.6 a1.85 1.85 0 0 0 -1.85 -1.85 H3.3 a1.85 1.85 0 0 0 -1.85 1.85 V10.8 a1.85 1.85 0 0 0 1.85 1.85 H12.9' />
<path d='M9.7 12.65 V15.9 M6.0 15.9 H13.0' />
<path d='M21.05 13.6 V9 a1.95 1.95 0 0 0 -1.95 -1.95 H17 a1.95 1.95 0 0 0 -1.95 1.95 V14 a1.95 1.95 0 0 0 1.95 1.95 H20.7' />
</g></svg>
<svg class=ab style='left:1814px;top:20px' width=20 height=18 viewBox='0 0 20 18'>
<rect x=1.75 y=2.25 width=16.2 height=13.7 fill=none stroke='#3aa9f2' stroke-width=1.9 />
<rect x=4.8 y=0 width=2 height=4.6 fill='#3aa9f2' /><rect x=13.2 y=0 width=2 height=4.6 fill='#3aa9f2' />
<g fill='#3aa9f2' fill-opacity=0.85><rect x=5.1 y=7 width=2 height=2 /><rect x=9 y=7 width=2 height=2 /><rect x=13 y=7 width=2 height=2 />
<rect x=5.1 y=11 width=2 height=2 /><rect x=9 y=11 width=2 height=2 /><rect x=13 y=11 width=2 height=2 /></g></svg>
<svg class=ab style='left:1389.3px;top:24.1px' width=12 height=9 viewBox='0 0 12 9'><path d='M1 1.8 L6 6.8 L11 1.8' stroke='#444' stroke-width=1.7 fill=none /></svg>
<svg class=ab style='left:1742.6px;top:24.5px' width=12 height=9 viewBox='0 0 12 9'><path d='M1 1.8 L6 6.8 L11 1.8' stroke='#444' stroke-width=1.7 fill=none /></svg>
<svg class=ab style='left:1950.8px;top:24.6px' width=12 height=9 viewBox='0 0 12 9'><path d='M1 1.8 L6 6.8 L11 1.8' stroke='#444' stroke-width=1.7 fill=none /></svg>
<svg class=ab style='left:2003px;top:17px' width=24 height=25 viewBox='0 0 24 25'>
<path d='M4.4 16.1 L2.3 19.8 H20.7 L18.2 16.1 Z' fill='#a1a4ae' />
<rect x=6.6 y=14 width=9.4 height=4.3 fill='#ffffff' />
<path d='M5.6 17.6 V10.9 C5.6 7.5 8 5.1 11.3 5.1 C14.6 5.1 17 7.5 17 10.9 V17.6' fill=none stroke='#a1a4ae' stroke-width=2 />
<rect x=10.3 y=1.2 width=2 height=3.4 rx=1 fill='#a1a4ae' />
<path d='M9.2 21.2 H13.5 A2.15 2.15 0 0 1 9.2 21.2 Z' fill='#a1a4ae' />
<circle cx=18.8 cy=7.9 r=3.6 fill='#39acf4' /></svg>
<svg class=ab style='left:1874.2px;top:798.8px' width=17 height=17 viewBox='0 0 17 17'><circle cx=8.5 cy=8.5 r=8.5 fill='#ee3a47' /><rect x=7.6 y=3.8 width=1.8 height=6.3 rx=0.5 fill='#fff' /><circle cx=8.5 cy=12.6 r=1.05 fill='#fff' /></svg>
<svg class=ab style='left:1874.2px;top:855.8px' width=17 height=17 viewBox='0 0 17 17'><circle cx=8.5 cy=8.5 r=8.5 fill='#ee3a47' /><rect x=7.6 y=3.8 width=1.8 height=6.3 rx=0.5 fill='#fff' /><circle cx=8.5 cy=12.6 r=1.05 fill='#fff' /></svg>
<svg class=ab style='left:1874.2px;top:911.7px' width=17 height=17 viewBox='0 0 17 17'><circle cx=8.5 cy=8.5 r=8.5 fill='#ee3a47' /><rect x=7.6 y=3.8 width=1.8 height=6.3 rx=0.5 fill='#fff' /><circle cx=8.5 cy=12.6 r=1.05 fill='#fff' /></svg>
<svg class=ab style='left:1874.2px;top:968.5px' width=17 height=17 viewBox='0 0 17 17'><circle cx=8.5 cy=8.5 r=8.5 fill='#ee3a47' /><rect x=7.6 y=3.8 width=1.8 height=6.3 rx=0.5 fill='#fff' /><circle cx=8.5 cy=12.6 r=1.05 fill='#fff' /></svg>
<svg class=ab style='left:1268px;top:751.5px' width=10 height=7 viewBox='0 0 10 7'><path d='M0 6.3 L5 0.3 L10 6.3 Z' fill='#333' /></svg>
</body></html>
